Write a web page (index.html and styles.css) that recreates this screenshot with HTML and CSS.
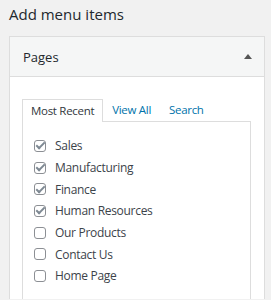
FILE: index.html
```html
<!DOCTYPE html>
<html lang="en">

<head>
  <meta charset="UTF-8" />
  <meta name="viewport" content="width=device-width, initial-scale=1.0" />
  <title>Add menu items</title>
  <link rel="stylesheet" href="styles.css">
</head>

<body>
  <h2 class="titulo">Add menu items</h2>

  <div class="panel">
    <div class="panel-header">
      <span>Pages</span>
      <span class="flecha"></span>
    </div>

    <div class="panel-body">
      <ul class="tabs">
        <li class="tab activa">Most Recent</li>
        <li class="tab"><a href="#">View All</a></li>
        <li class="tab"><a href="#">Search</a></li>
      </ul>

      <div class="tab-contenido">
        <label class="opcion"><input type="checkbox" checked /> <span>Sales</span></label>
        <label class="opcion"><input type="checkbox" checked /> <span>Manufacturing</span></label>
        <label class="opcion"><input type="checkbox" checked /> <span>Finance</span></label>
        <label class="opcion"><input type="checkbox" checked /> <span>Human Resources</span></label>
        <label class="opcion"><input type="checkbox" /> <span>Our Products</span></label>
        <label class="opcion"><input type="checkbox" /> <span>Contact Us</span></label>
        <label class="opcion"><input type="checkbox" /> <span>Home Page</span></label>
      </div>
    </div>
  </div>
</body>

</html>
```

FILE: styles.css
```css
html {
  height: 300px;
  overflow: hidden;
}

body {
  margin: 0;
  padding: 0 0 0 9px;
  background-color: #f1f1f1;
  font-family: "Open Sans", "Noto Sans", sans-serif;
  color: #32373c;
}

.titulo {
  margin: 0;
  padding-top: 4px;
  height: 32px;
  font-size: 15px;
  font-weight: 400;
  color: #23282d;
}

.panel {
  width: 254px;
  height: 262px;
  border: 1px solid #ddd;
  border-bottom: none;
  background-color: #fff;
}

.panel-header {
  display: flex;
  justify-content: space-between;
  align-items: center;
  height: 39px;
  padding: 0 12px 0 13px;
  background-color: #f5f6f6;
  border-bottom: 1px solid #ddd;
  font-size: 13px;
  color: #23282d;
}

.flecha {
  width: 0;
  height: 0;
  border-left: 4px solid transparent;
  border-right: 4px solid transparent;
  border-bottom: 5px solid #555;
}

.panel-body {
  padding: 21px 12px 0 12px;
}

.tabs {
  display: flex;
  margin: 0;
  padding: 0;
  list-style: none;
  font-size: 11.5px;
  letter-spacing: -0.3px;
  line-height: 22px;
}

.tab {
  padding: 0 8px 0 8px;
  border: 1px solid transparent;
  border-bottom: none;
}

.tab a {
  color: #0073aa;
  text-decoration: none;
}

.tab.activa {
  border-color: #ddd;
  background-color: #fff;
  color: #32373c;
  position: relative;
  top: 1px;
}

.tab-contenido {
  display: flex;
  flex-direction: column;
  width: 227px;
  height: 174px;
  padding-top: 13px;
  border: 1px solid #ddd;
}

.opcion {
  display: flex;
  align-items: center;
  gap: 9px;
  height: 21.7px;
  padding-left: 11px;
  font-size: 12px;
  letter-spacing: -0.3px;
  color: #3c434a;
}

.opcion input {
  appearance: none;
  box-sizing: border-box;
  margin: 0;
  width: 12px;
  height: 12px;
  border: 1px solid #8c8f94;
  border-radius: 3px;
  background-color: #fff;
  display: grid;
  place-items: center;
}

.opcion input:checked::before {
  content: "";
  width: 3px;
  height: 7px;
  margin-top: -2px;
  border: solid #7e8993;
  border-width: 0 2px 2px 0;
  transform: rotate(45deg);
}
```
